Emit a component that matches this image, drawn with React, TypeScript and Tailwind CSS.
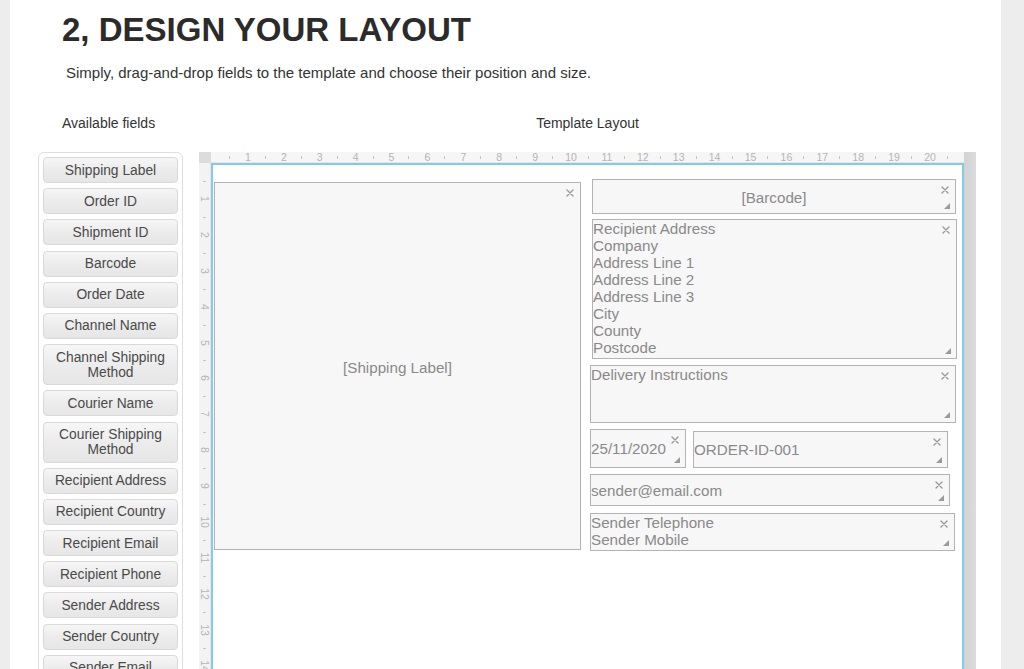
import React from "react";

const FIELDS = [
  "Shipping Label",
  "Order ID",
  "Shipment ID",
  "Barcode",
  "Order Date",
  "Channel Name",
  "Channel Shipping Method",
  "Courier Name",
  "Courier Shipping Method",
  "Recipient Address",
  "Recipient Country",
  "Recipient Email",
  "Recipient Phone",
  "Sender Address",
  "Sender Country",
  "Sender Email",
  "Sender Phone",
];

// wrapped labels break after the second word, like the original widget
const TWO_LINE: Record<string, [string, string]> = {
  "Channel Shipping Method": ["Channel Shipping", "Method"],
  "Courier Shipping Method": ["Courier Shipping", "Method"],
};

const CM = 35.9;

type Block = {
  id: string;
  x: number;
  y: number;
  w: number;
  h: number;
  lines: string[];
  align: "center" | "middle" | "top";
  resize?: boolean;
};

const BLOCKS: Block[] = [
  { id: "label", x: 1, y: 17, w: 367, h: 368, lines: ["[Shipping Label]"], align: "center" },
  { id: "barcode", x: 379, y: 14, w: 364, h: 35, lines: ["[Barcode]"], align: "center", resize: true },
  {
    id: "recipient",
    x: 379,
    y: 54,
    w: 365,
    h: 140,
    lines: ["Recipient Address", "Company", "Address Line 1", "Address Line 2", "Address Line 3", "City", "County", "Postcode"],
    align: "top",
    resize: true,
  },
  { id: "delivery", x: 377, y: 200, w: 366, h: 58, lines: ["Delivery Instructions"], align: "top", resize: true },
  { id: "date", x: 377, y: 264, w: 96, h: 39, lines: ["25/11/2020"], align: "middle", resize: true },
  { id: "order", x: 480, y: 266, w: 255, h: 37, lines: ["ORDER-ID-001"], align: "middle", resize: true },
  { id: "email", x: 377, y: 309, w: 360, h: 32, lines: ["sender@email.com"], align: "middle", resize: true },
  { id: "phone", x: 377, y: 348, w: 365, h: 38, lines: ["Sender Telephone", "Sender Mobile"], align: "top", resize: true },
];

function CloseMark() {
  return (
    <svg width="8" height="8" viewBox="0 0 8 8" className="absolute right-[6px] top-[6px]">
      <path d="M1 1L7 7M7 1L1 7" stroke="#9a9a9a" strokeWidth="1.4" strokeLinecap="round" />
    </svg>
  );
}

function ResizeMark() {
  return (
    <svg width="6" height="6" viewBox="0 0 6 6" className="absolute bottom-[4px] right-[5px]">
      <path d="M6 0V6H0Z" fill="#9a9a9a" />
    </svg>
  );
}

function FieldBlock({ b }: { b: Block }) {
  const body =
    b.align === "center"
      ? "items-center justify-center"
      : b.align === "middle"
        ? "items-center"
        : "items-start";
  return (
    <div
      className={`absolute flex border border-[#b3b3b3] bg-[#f7f7f7] text-[15.2px] leading-[17px] text-[#8a8a8a] ${body}`}
      style={{ left: b.x, top: b.y, width: b.w, height: b.h }}
    >
      <div className={b.align === "center" ? "mt-[2px]" : ""}>
        {b.lines.map((l) => (
          <div key={l}>{l}</div>
        ))}
      </div>
      <CloseMark />
      {b.resize && <ResizeMark />}
    </div>
  );
}

function TopRuler() {
  return (
    <div className="relative h-[11px] border-b border-[#e6e6e6] bg-[#f6f6f6] text-[10.5px] leading-[11px] text-[#b4b4b4]">
      {Array.from({ length: 21 }, (_, i) => (
        <React.Fragment key={i}>
          <span className="absolute top-[4px] h-[3px] w-px bg-[#c4c4c4]" style={{ left: i * CM + CM / 2 }} />
          {i > 0 && (
            <span className="absolute top-0 w-[20px] -translate-x-1/2 text-center" style={{ left: i * CM + 1 }}>
              {i}
            </span>
          )}
        </React.Fragment>
      ))}
    </div>
  );
}

function LeftRuler() {
  return (
    <div className="relative flex-1 border-r border-[#e6e6e6] bg-[#f3f3f3] text-[10.5px] leading-[12px] text-[#b4b4b4]">
      {Array.from({ length: 15 }, (_, i) => (
        <React.Fragment key={i}>
          <span className="absolute left-[4px] h-px w-[3px] bg-[#c4c4c4]" style={{ top: i * CM + CM / 2 }} />
          {i > 0 && (
            <span
              className="absolute left-[6px] w-[20px] -translate-x-1/2 -translate-y-1/2 rotate-90 text-center"
              style={{ top: i * CM }}
            >
              {i}
            </span>
          )}
        </React.Fragment>
      ))}
    </div>
  );
}

export default function App() {
  return (
    <div className="flex h-screen overflow-hidden bg-[#ededed]" style={{ fontFamily: '"Liberation Sans", Arial, sans-serif' }}>
      <div className="ml-[10px] w-[991px] bg-white">
        <h1 className="ml-[52px] mt-[13px] text-[33px] font-bold leading-[33px] text-[#2b2b2b]">2, DESIGN YOUR LAYOUT</h1>
        <p className="ml-[56px] mt-[17px] text-[15px] leading-[20px] text-[#333]">
          Simply, drag-and-drop fields to the template and choose their position and size.
        </p>

        <div className="mt-[30px] flex text-[14px] leading-[20px] text-[#333]">
          <div className="ml-[52px] w-[137px]">Available fields</div>
          <div className="w-[777px] text-center">Template Layout</div>
        </div>

        <div className="mt-[19px] flex items-start">
          {/* field palette */}
          <div className="ml-[28px] w-[145px] rounded-[6px] border border-[#dedede] px-[4px] pt-[4px]">
            {FIELDS.map((f) => {
              const two = TWO_LINE[f];
              return (
                <div
                  key={f}
                  className="mb-[5.2px] rounded-[4px] border border-[#d9d9d9] bg-gradient-to-b from-[#f6f6f6] via-[#ececec] to-[#e6e6e6] py-[4.5px] text-center text-[13.8px] leading-[15px] text-[#4a4a4a]"
                >
                  {two ? (
                    <>
                      <div>{two[0]}</div>
                      <div>{two[1]}</div>
                    </>
                  ) : (
                    f
                  )}
                </div>
              );
            })}
          </div>

          {/* template editor */}
          <div className="ml-[16px] flex h-[560px] w-[777px] bg-[#d6d6d6]">
            <div className="flex w-[12px] flex-col">
              <div className="h-[11px] bg-[#dcdcdc]" />
              <LeftRuler />
            </div>
            <div className="flex w-[753px] flex-col">
              <TopRuler />
              <div className="relative flex-1 border-2 border-[#86caea] bg-white">
                {BLOCKS.map((b) => (
                  <FieldBlock key={b.id} b={b} />
                ))}
              </div>
            </div>
            <div className="w-[12px] bg-gradient-to-r from-[#d2d2d2] to-[#dcdcdc]" />
          </div>
        </div>
      </div>
    </div>
  );
}
